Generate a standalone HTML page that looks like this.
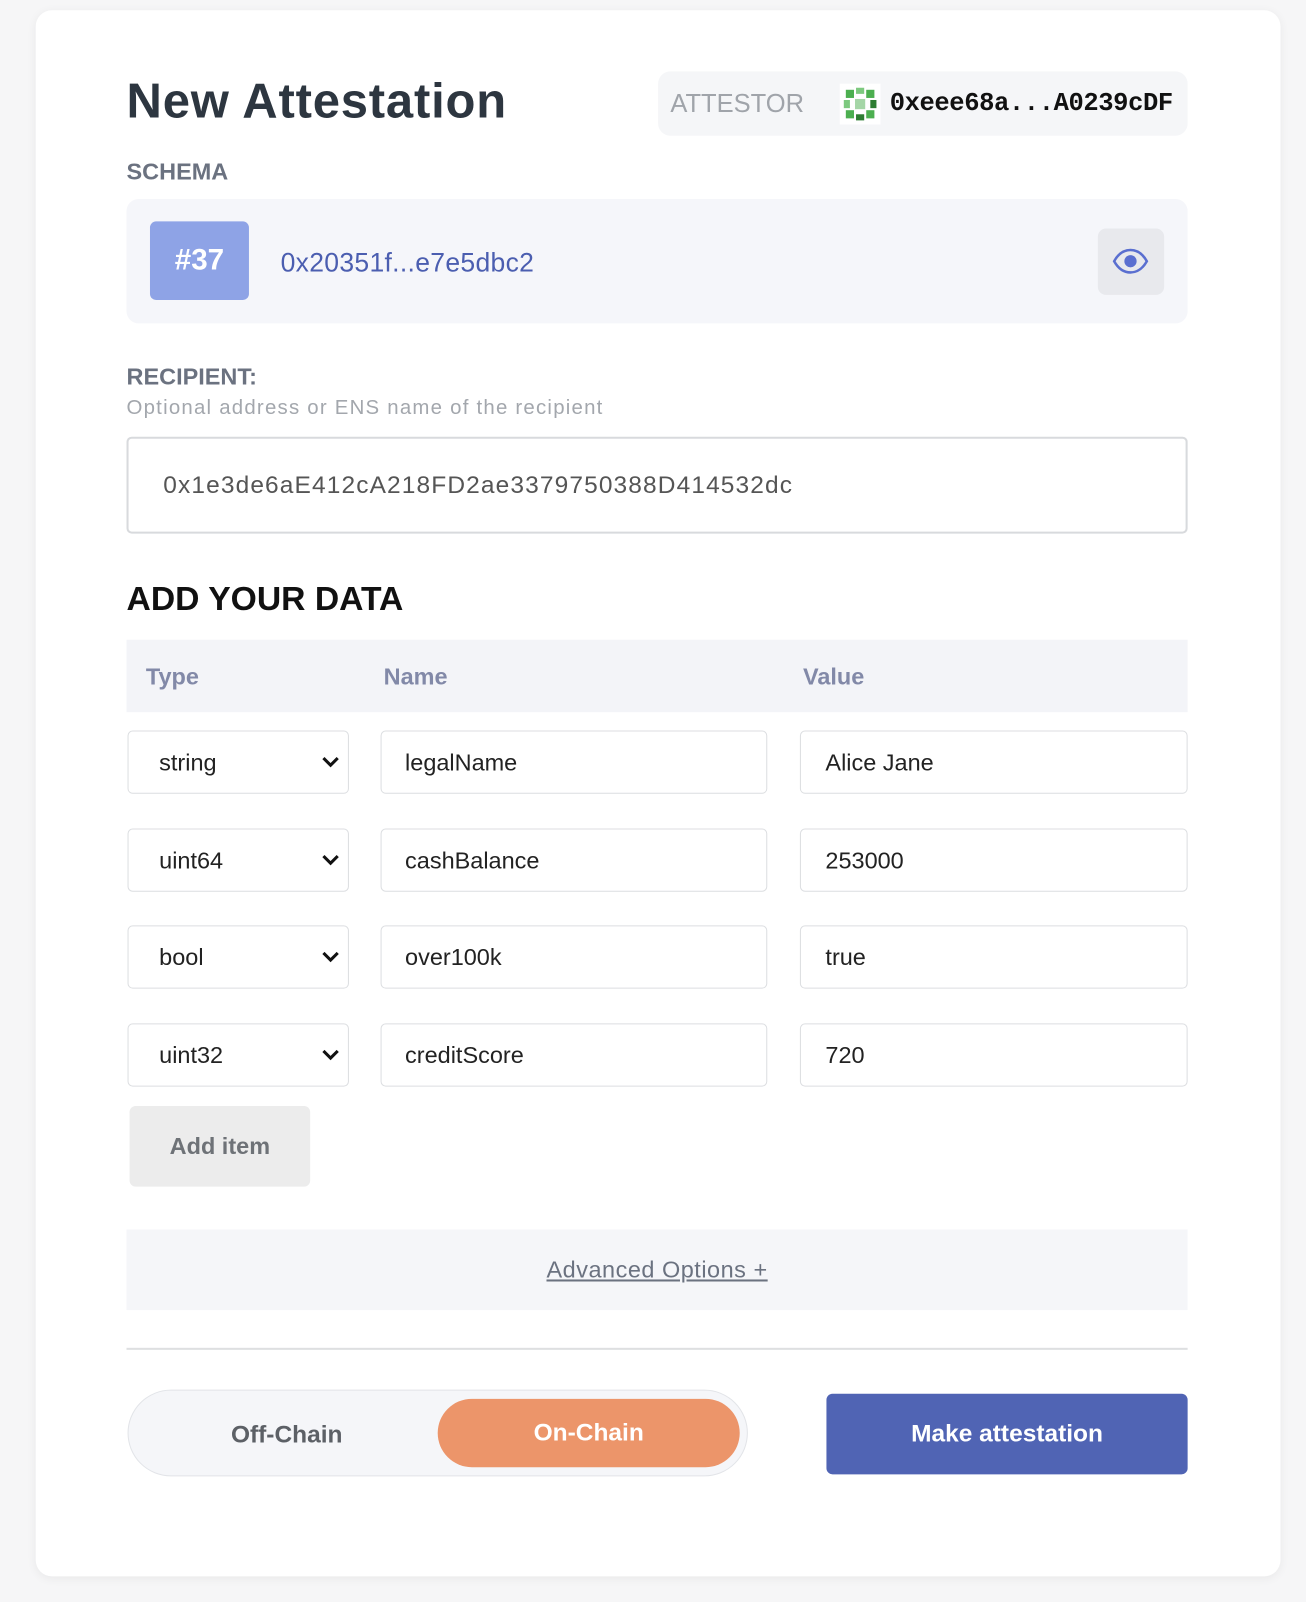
<!DOCTYPE html>
<html><head><meta charset="utf-8"><style>
html,body{margin:0;padding:0;width:1306px;height:1602px;overflow:hidden;background:#f6f6f7;font-family:"Liberation Sans",sans-serif}
#w{position:absolute;left:0;top:0;width:1280px;height:1570px;transform:scale(1.0203);transform-origin:0 0}
.a{position:absolute}
.card{left:35px;top:10px;width:1220px;height:1535px;background:#fff;border-radius:16px;box-shadow:0 2px 10px rgba(0,0,0,.06)}
.lbl{color:#6b7280;font-weight:bold;font-size:23px}
.box{border:1.5px solid #dcdee1;border-radius:5px;box-sizing:border-box;height:62px;font-size:23px;color:#222;display:flex;align-items:center;background:#fff}
.sel{left:125px;width:217px;padding-left:30px}
.sel svg{position:absolute;right:8px;top:23px}
.nm{left:373px;width:379px;padding-left:23px}
.vl{left:784px;width:380px;padding-left:24px}
</style></head><body><div id="w">
<div class="a card"></div>
<div class="a" style="left:124px;top:72px;font-size:48px;font-weight:bold;color:#2d3640;letter-spacing:0.8px">New Attestation</div>
<div class="a" style="left:645px;top:70px;width:519px;height:63px;background:#f5f6f8;border-radius:12px"></div>
<div class="a" style="left:657px;top:88px;font-size:25px;color:#a0a4aa">ATTESTOR</div>
<div class="a" style="left:823px;top:82px;width:40px;height:40px;background:#fff">
<svg width="40" height="40" viewBox="0 0 40 40"><g fill="#4caf50"><rect x="6" y="6" width="8" height="8"/><rect x="26" y="6" width="8" height="8"/><rect x="6" y="26" width="8" height="8"/><rect x="26" y="26" width="8" height="8"/><rect x="16" y="4" width="8" height="6" fill="#7dc97f"/><rect x="16" y="30" width="8" height="6" fill="#2e7d32"/><rect x="4" y="16" width="6" height="8" fill="#7dc97f"/><rect x="30" y="16" width="6" height="8" fill="#2e7d32"/><rect x="15" y="15" width="10" height="10" fill="#a5d6a7"/></g></svg></div>
<div class="a" style="left:872px;top:87px;font-size:25px;font-weight:bold;color:#111;font-family:'Liberation Mono',monospace;letter-spacing:-0.4px">0xeee68a...A0239cDF</div>
<div class="a lbl" style="left:124px;top:155px">SCHEMA</div>
<div class="a" style="left:124px;top:195px;width:1040px;height:122px;background:#f5f6fa;border-radius:12px"></div>
<div class="a" style="left:147px;top:217px;width:97px;height:77px;background:#8ea3e6;border-radius:6px;color:#fff;font-weight:bold;font-size:29px;display:flex;align-items:center;justify-content:center">#37</div>
<div class="a" style="left:275px;top:242px;font-size:26px;color:#4b5eb0;letter-spacing:0.3px">0x20351f...e7e5dbc2</div>
<div class="a" style="left:1076px;top:224px;width:65px;height:65px;background:#e8e9ed;border-radius:8px">
<svg class="a" style="left:14px;top:18px" width="36" height="28" viewBox="0 0 36 28"><path d="M2 14C7 5 13 3 18 3s11 2 16 11c-5 9-11 11-16 11S7 23 2 14z" fill="none" stroke="#5a6fd0" stroke-width="2.5"/><circle cx="18" cy="14" r="6" fill="#5a6fd0"/></svg></div>
<div class="a lbl" style="left:124px;top:356px">RECIPIENT:</div>
<div class="a" style="left:124px;top:389px;font-size:20px;color:#a3a7ad;letter-spacing:1.2px">Optional address or ENS name of the recipient</div>
<div class="a box" style="left:124px;top:428px;width:1040px;height:95px;border:2px solid #d8dadd;padding-left:34px;color:#555;font-size:24px;letter-spacing:1.1px">0x1e3de6aE412cA218FD2ae3379750388D414532dc</div>
<div class="a" style="left:124px;top:568px;font-size:33px;font-weight:bold;color:#111">ADD YOUR DATA</div>
<div class="a" style="left:124px;top:627px;width:1040px;height:71px;background:#f3f4f8"></div>
<div class="a" style="left:143px;top:650px;font-size:23px;font-weight:bold;color:#8289a8">Type</div>
<div class="a" style="left:376px;top:650px;font-size:23px;font-weight:bold;color:#8289a8">Name</div>
<div class="a" style="left:787px;top:650px;font-size:23px;font-weight:bold;color:#8289a8">Value</div>

<div class="a box sel" style="top:716px">string<svg width="18" height="14" viewBox="0 0 18 14"><path d="M2 3l7 7 7-7" fill="none" stroke="#111" stroke-width="3"/></svg></div>
<div class="a box nm" style="top:716px">legalName</div>
<div class="a box vl" style="top:716px">Alice Jane</div>
<div class="a box sel" style="top:812px">uint64<svg width="18" height="14" viewBox="0 0 18 14"><path d="M2 3l7 7 7-7" fill="none" stroke="#111" stroke-width="3"/></svg></div>
<div class="a box nm" style="top:812px">cashBalance</div>
<div class="a box vl" style="top:812px">253000</div>
<div class="a box sel" style="top:907px">bool<svg width="18" height="14" viewBox="0 0 18 14"><path d="M2 3l7 7 7-7" fill="none" stroke="#111" stroke-width="3"/></svg></div>
<div class="a box nm" style="top:907px">over100k</div>
<div class="a box vl" style="top:907px">true</div>
<div class="a box sel" style="top:1003px">uint32<svg width="18" height="14" viewBox="0 0 18 14"><path d="M2 3l7 7 7-7" fill="none" stroke="#111" stroke-width="3"/></svg></div>
<div class="a box nm" style="top:1003px">creditScore</div>
<div class="a box vl" style="top:1003px">720</div>

<div class="a" style="left:127px;top:1084px;width:177px;height:79px;background:#ececec;border-radius:6px;display:flex;align-items:center;justify-content:center;font-size:23px;font-weight:bold;color:#6e7277">Add item</div>
<div class="a" style="left:124px;top:1205px;width:1040px;height:79px;background:#f5f6f9;display:flex;align-items:center;justify-content:center;font-size:23px;color:#6b7280;text-decoration:underline;letter-spacing:0.5px">Advanced Options +</div>
<div class="a" style="left:124px;top:1321px;width:1040px;height:2px;background:#dedfe1"></div>
<div class="a" style="left:125px;top:1362px;width:608px;height:85px;box-sizing:border-box;border:1.5px solid #e2e4e8;background:#f5f6f9;border-radius:43px"></div>
<div class="a" style="left:125px;top:1393px;width:312px;text-align:center;font-size:24px;font-weight:bold;color:#5c6066">Off-Chain</div>
<div class="a" style="left:429px;top:1371px;width:296px;height:67px;background:#ec956a;border-radius:34px;display:flex;align-items:center;justify-content:center;font-size:24px;font-weight:bold;color:#fff">On-Chain</div>
<div class="a" style="left:810px;top:1366px;width:354px;height:79px;background:#5064b4;border-radius:6px;display:flex;align-items:center;justify-content:center;font-size:24px;font-weight:bold;color:#fff">Make attestation</div>
</div></body></html>
